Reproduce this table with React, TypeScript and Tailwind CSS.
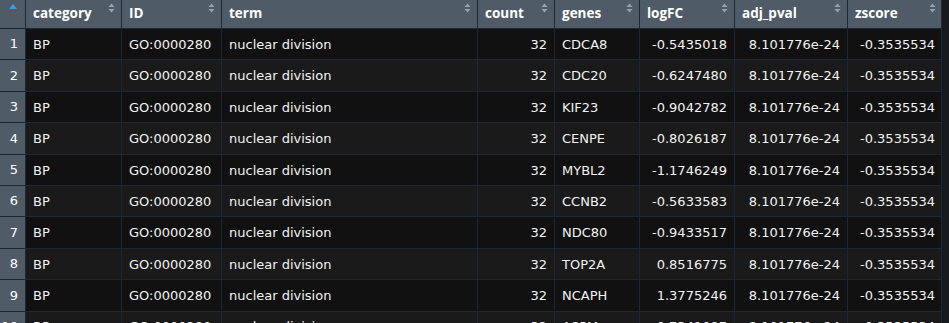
import React from 'react';

type Row = {
  category: string;
  id: string;
  term: string;
  count: number;
  genes: string;
  logFC: string;
  adjPval: string;
  zscore: string;
};

const genes: [string, string][] = [
  ['CDCA8', '-0.5435018'],
  ['CDC20', '-0.6247480'],
  ['KIF23', '-0.9042782'],
  ['CENPE', '-0.8026187'],
  ['MYBL2', '-1.1746249'],
  ['CCNB2', '-0.5633583'],
  ['NDC80', '-0.9433517'],
  ['TOP2A', '0.8516775'],
  ['NCAPH', '1.3775246'],
  ['ASPM', '-0.7341087'],
];

const rows: Row[] = genes.map(([g, fc]) => ({
  category: 'BP',
  id: 'GO:0000280',
  term: 'nuclear division',
  count: 32,
  genes: g,
  logFC: fc,
  adjPval: '8.101776e-24',
  zscore: '-0.3535534',
}));

const columns = [
  { key: 'category', label: 'category', w: 'w-[96px]', right: false },
  { key: 'id', label: 'ID', w: 'w-[100px]', right: false },
  { key: 'term', label: 'term', w: 'w-[256px]', right: false },
  { key: 'count', label: 'count', w: 'w-[77px]', right: true },
  { key: 'genes', label: 'genes', w: 'w-[85px]', right: false },
  { key: 'logFC', label: 'logFC', w: 'w-[95px]', right: true },
  { key: 'adjPval', label: 'adj_pval', w: 'w-[113px]', right: true },
  { key: 'zscore', label: 'zscore', w: 'w-[94px]', right: true },
] as const;

const SortIcon = () => (
  <svg width="7" height="10" viewBox="0 0 7 10" className="absolute right-[6px] top-[3px]">
    <path d="M3.5 0.5 L6.5 4 L0.5 4 Z" fill="#9aa3ab" />
    <path d="M3.5 9.5 L6.5 6 L0.5 6 Z" fill="#9aa3ab" />
  </svg>
);

const App: React.FC = () => {
  return (
    <div className="w-[949px] h-[323px] overflow-hidden bg-[#161a1f] flex font-['DejaVu_Sans']">
      <div className="flex flex-col w-[942px] shrink-0 border-r border-[#1d2835]">
        {/* header */}
        <div className="flex h-[29px] shrink-0 bg-[#4f5b66] border-b border-[#1d2835] font-['Open_Sans']">
          <div className="relative w-[26px] shrink-0 border-r border-[#1d2835]">
            <svg width="8" height="5" viewBox="0 0 8 5" className="absolute left-[9px] top-[4px]">
              <path d="M4 0 L8 5 L0 5 Z" fill="#3d9be0" />
            </svg>
          </div>
          {columns.map((c) => (
            <div
              key={c.key}
              className={`relative ${c.w} shrink-0 border-r border-[#1d2835] last:border-r-0 px-[7px] pb-[2px] flex items-center text-[13.5px] font-bold text-white`}
            >
              {c.label}
              <SortIcon />
            </div>
          ))}
        </div>
        {/* body */}
        {rows.map((r, i) => (
          <div key={i} className={`flex h-[31.4px] shrink-0 border-b border-[#1d2835] ${i % 2 === 0 ? 'bg-[#111111]' : 'bg-[#1a1a1a]'}`}>
            <div className="w-[26px] shrink-0 bg-[#4f5b66] border-r border-[#1d2835] flex items-center justify-end pr-[7px] text-[13px] text-white">
              {i + 1}
            </div>
            {columns.map((c) => (
              <div
                key={c.key}
                className={`${c.w} shrink-0 border-r border-[#1d2835] last:border-r-0 px-[7px] pt-[1px] flex items-center text-[13px] text-[#f2f2f2] ${c.right ? 'justify-end' : ''}`}
              >
                {String(r[c.key as keyof Row])}
              </div>
            ))}
          </div>
        ))}
      </div>
    </div>
  );
};

export default App;
